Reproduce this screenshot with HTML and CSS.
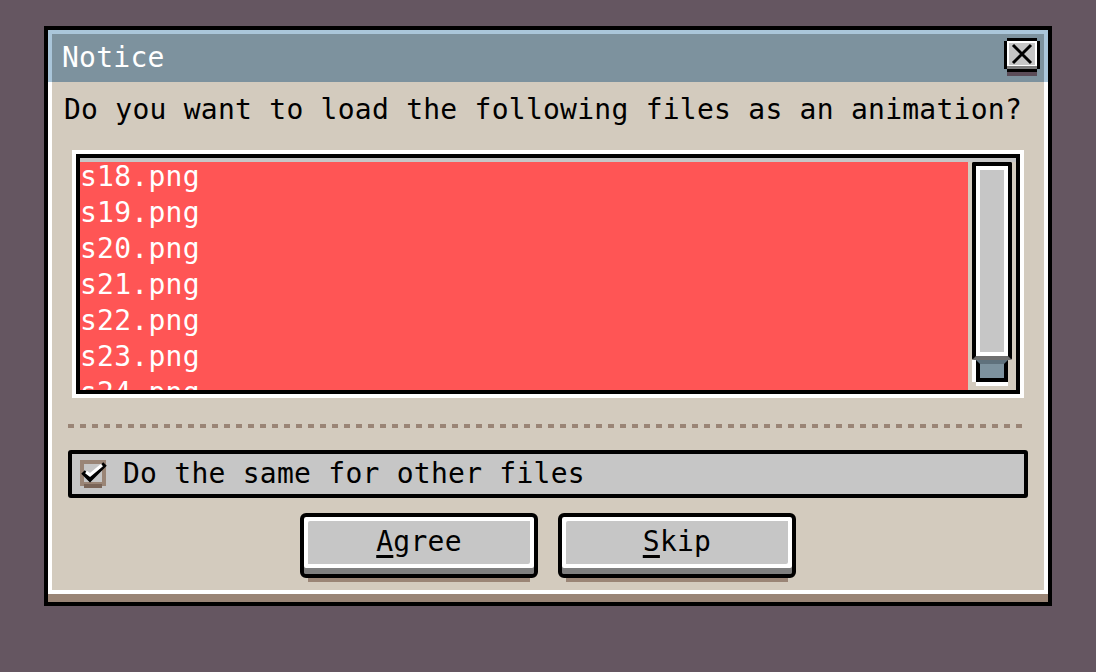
FILE: index.html
```html
<!DOCTYPE html>
<html lang="en">
<head>
    <meta charset="UTF-8">
    <title>Notice</title>
    <link rel="stylesheet" href="styles.css">
</head>
<body>

    <div class="dialog">
        <div class="titlebar">
            <span class="title">Notice</span>
            <span class="close-btn">
                <svg width="36" height="38" viewBox="0 0 36 38">
                    <rect x="3" y="34" width="30" height="4" fill="#5b4c58"/>
                    <path d="M3 0h30v3h3v28h-3v3H3v-3H0V3h3z" fill="#000"/>
                    <rect x="3" y="3" width="30" height="28" fill="#fff"/>
                    <rect x="5" y="5" width="26" height="22" fill="#c6c6c6"/>
                    <rect x="3" y="28" width="30" height="3" fill="#7b7b7b"/>
                    <path d="M9 7l18 18M27 7L9 25" stroke="#000" stroke-width="3" fill="none"/>
                </svg>
            </span>
        </div>

        <div class="content">
            <p class="message">Do you want to load the following files as an animation?</p>

            <div class="listbox">
                <div class="listbox-inner">
                    <ul class="file-list">
                        <li>s18.png</li>
                        <li>s19.png</li>
                        <li>s20.png</li>
                        <li>s21.png</li>
                        <li>s22.png</li>
                        <li>s23.png</li>
                        <li>s24.png</li>
                    </ul>
                    <div class="scrollbar">
                        <div class="thumb"></div>
                        <div class="track"></div>
                    </div>
                </div>
            </div>

            <div class="separator"></div>

            <label class="check-row">
                <svg width="30" height="28" viewBox="0 0 30 28">
                    <rect x="2" y="2" width="22" height="22" stroke="#9a8576" stroke-width="4" fill="none"/>
                    <rect x="4" y="24" width="18" height="4" fill="#7a6558"/>
                    <polyline points="3,12 10,19 25,4" stroke="#000" stroke-width="5" fill="none"/>
                    <polyline points="6,12 10,15 22,5" stroke="#fff" stroke-width="3" fill="none"/>
                </svg>
                <span>Do the same for other files</span>
            </label>

            <div class="buttons">
                <button class="btn"><u>A</u>gree</button>
                <button class="btn"><u>S</u>kip</button>
            </div>
        </div>
    </div>

</body>
</html>
```

FILE: styles.css
```css
body {
    margin: 0;
    padding: 26px 0 0 44px;
    height: 672px;
    box-sizing: border-box;
    background-color: #655661;
    font-family: "DejaVu Sans Mono", monospace;
    font-size: 28px;
    letter-spacing: 0.25px;
    color: #000;
}

.dialog {
    width: 1008px;
    height: 580px;
    box-sizing: border-box;
    border: 4px solid #000;
    background-color: #9a8576; /* bottom shadow strip */
    padding-bottom: 8px;
    display: flex;
    flex-direction: column;
}

/* Title bar */
.titlebar {
    height: 52px;
    box-sizing: border-box;
    background-color: #7d929e;
    border: 4px solid #aac6da;
    border-bottom: 0;
    display: flex;
    justify-content: space-between;
    padding-left: 10px;
}

.title {
    color: #fff;
    line-height: 36px;
    margin-top: 6px;
}

.close-btn {
    display: flex;
    margin: 4px 4px 0 0;
}

/* Dialog body */
.content {
    flex: 1;
    background-color: #d3cbbe;
    border: 4px solid #fff;
    border-top: 0;
    display: flex;
    flex-direction: column;
}

.message {
    margin: 10px 0 0 12px;
    line-height: 36px;
}

.listbox {
    margin: 22px 0 0 20px;
    width: 952px;
    height: 248px;
    box-sizing: border-box;
    border: 4px solid #fff;
}

.listbox-inner {
    height: 100%;
    box-sizing: border-box;
    border: 4px solid #000;
    box-shadow: inset 0 4px 0 #c6c6c6;
    padding: 4px 4px 0 0;
    display: flex;
    gap: 4px;
}

.file-list {
    list-style: none;
    margin: 0;
    padding: 0;
    flex: 1;
    background-color: #ff5555;
    color: #fff;
    overflow: hidden;
}

.file-list li {
    height: 36px;
    line-height: 30px;
}

.scrollbar {
    width: 40px;
    display: flex;
    flex-direction: column;
}

.thumb {
    height: 198px;
    box-sizing: border-box;
    border: 4px solid #000;
    border-bottom-color: #6e6e6e;
    border-radius: 2px;
    background-color: #c6c6c6;
    box-shadow: inset 0 0 0 4px #fff;
}

.track {
    height: 22px;
    margin: 0 4px;
    box-sizing: border-box;
    background-color: #7d929e;
    border: 4px solid #000;
    border-top: 4px solid #5f717c;
    box-shadow: 0 4px 0 #fff, -4px 0 0 #fff;
}

.separator {
    margin: 26px 0 0 16px;
    width: 956px;
    height: 4px;
    background: repeating-linear-gradient(to right, #9a8576 0 6px, transparent 6px 12px);
}

/* Checkbox row */
.check-row {
    margin: 22px 0 0 16px;
    width: 960px;
    height: 48px;
    box-sizing: border-box;
    border: 4px solid #000;
    border-radius: 3px;
    background-color: #c6c6c6;
    display: flex;
    align-items: center;
    gap: 13px;
    padding-left: 8px;
    line-height: 36px;
}

.check-row svg {
    flex-shrink: 0;
}

/* Buttons */
.buttons {
    display: flex;
    justify-content: center;
    gap: 20px;
    margin-top: 15px;
}

.btn {
    width: 238px;
    height: 65px;
    box-sizing: border-box;
    border: 4px solid #000;
    border-radius: 6px;
    background-color: #c6c6c6;
    font: inherit;
    letter-spacing: inherit;
    color: #000;
    line-height: 36px;
    padding: 0 0 8px;
    box-shadow:
        inset 0 -6px 0 #7f7f7f,
        inset 4px 4px 0 #fff,
        inset -4px -10px 0 #fff,
        0 12px 0 -8px #9a8576;
}

.btn u {
    text-decoration-thickness: 3px;
    text-underline-offset: 4px;
}
```
